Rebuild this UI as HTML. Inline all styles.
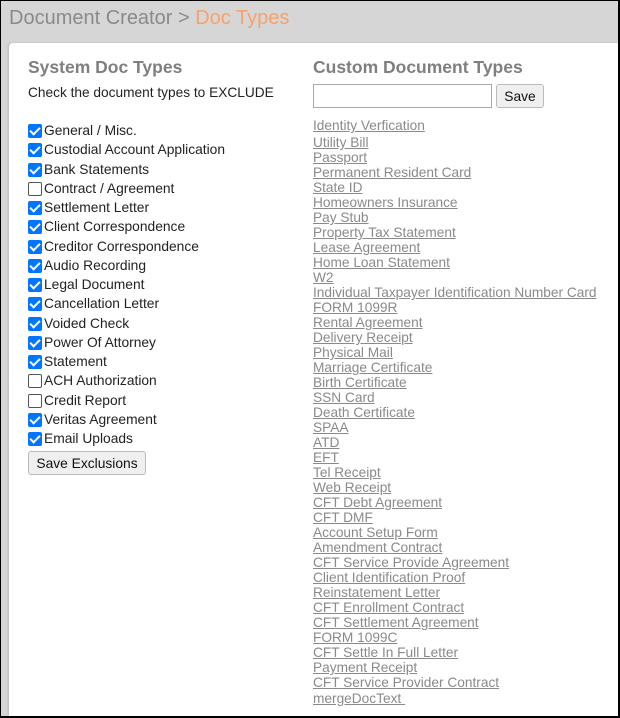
<!DOCTYPE html>
<html><head><meta charset="utf-8"><style>
*{margin:0;padding:0;box-sizing:border-box}
body{width:620px;height:718px;overflow:hidden;background:#d6d6d6;font-family:"Liberation Sans",Arial,sans-serif;position:relative}
.hdr{position:absolute;left:9px;top:7px;font-size:20px;color:#8a8a8a}
.hdr span{color:#f7a26b}
.panel{position:absolute;left:9px;top:43px;right:2px;bottom:2px;background:#fff;border-radius:4px 0 0 0;box-shadow:-1px 0 2px #bbb}
.edge{position:absolute;left:0;top:0;right:0;bottom:0;border:1px solid #000;border-right-width:2px;border-bottom-width:2px;pointer-events:none}
h2{position:absolute;font-size:17.5px;font-weight:bold;color:#7f7f7f}
.sub{position:absolute;left:28px;top:85px;font-size:13.7px;color:#222}
.cb{position:absolute;left:28px;height:19px;font-size:13.8px;color:#222;display:flex;align-items:center}
.box{width:14px;height:14px;border-radius:2px;margin-right:2px;display:inline-block;position:relative}
.on{background:#0075ff}
.on:after{content:"";position:absolute;left:4px;top:1px;width:4px;height:8px;border:solid #fff;border-width:0 2px 2px 0;transform:rotate(45deg)}
.off{border:1px solid #555;background:#fff}
.btn{position:absolute;background:#efefef;border:1px solid #bbb;border-radius:3px;font-size:13.8px;color:#111;display:flex;align-items:center;justify-content:center}
.inp{position:absolute;left:313px;top:84px;width:179px;height:24px;border:1px solid #aaa;background:#fff}
.lk{position:absolute;left:313px;font-size:13.7px;color:#8a8a8a;text-decoration:underline;line-height:16px;white-space:nowrap}
</style></head><body>
<div class="hdr">Document Creator &gt; <span>Doc Types</span></div>
<div class="panel"></div>
<h2 style="left:28px;top:57px">System Doc Types</h2>
<h2 style="left:313px;top:57px">Custom Document Types</h2>
<div class="sub">Check the document types to EXCLUDE</div>
<div class="inp"></div>
<div class="btn" style="left:496px;top:84px;width:48px;height:24px">Save</div>
<div class="btn" style="left:28px;top:451px;width:118px;height:24px">Save Exclusions</div>
<div id="cbs"></div>
<div id="lks"></div>
<div class="edge"></div>
<script>
var c=[["General / Misc.",1],["Custodial Account Application",1],["Bank Statements",1],["Contract / Agreement",0],["Settlement Letter",1],["Client Correspondence",1],["Creditor Correspondence",1],["Audio Recording",1],["Legal Document",1],["Cancellation Letter",1],["Voided Check",1],["Power Of Attorney",1],["Statement",1],["ACH Authorization",0],["Credit Report",0],["Veritas Agreement",1],["Email Uploads",1]];
var h="";c.forEach(function(x,i){var y=Math.round(130+i*19.25-9);h+='<div class="cb" style="top:'+y+'px"><span class="box '+(x[1]?'on':'off')+'"></span>'+x[0]+'</div>'});
document.getElementById("cbs").innerHTML=h;
var l=["Utility Bill","Passport","Permanent Resident Card","State ID","Homeowners Insurance","Pay Stub","Property Tax Statement","Lease Agreement","Home Loan Statement","W2","Individual Taxpayer Identification Number Card","FORM 1099R","Rental Agreement","Delivery Receipt","Physical Mail","Marriage Certificate","Birth Certificate","SSN Card","Death Certificate","SPAA","ATD","EFT","Tel Receipt","Web Receipt","CFT Debt Agreement","CFT DMF","Account Setup Form","Amendment Contract","CFT Service Provide Agreement","Client Identification Proof","Reinstatement Letter","CFT Enrollment Contract","CFT Settlement Agreement","FORM 1099C","CFT Settle In Full Letter","Payment Receipt","CFT Service Provider Contract"];
h='<div class="lk" style="top:118px">Identity Verfication</div>';
l.forEach(function(x,i){h+='<div class="lk" style="top:'+(135+i*15)+'px">'+x+'</div>'});
h+='<div class="lk" style="top:691px">mergeDocText&nbsp;</div>';
document.getElementById("lks").innerHTML=h;
</script>
</body></html>
